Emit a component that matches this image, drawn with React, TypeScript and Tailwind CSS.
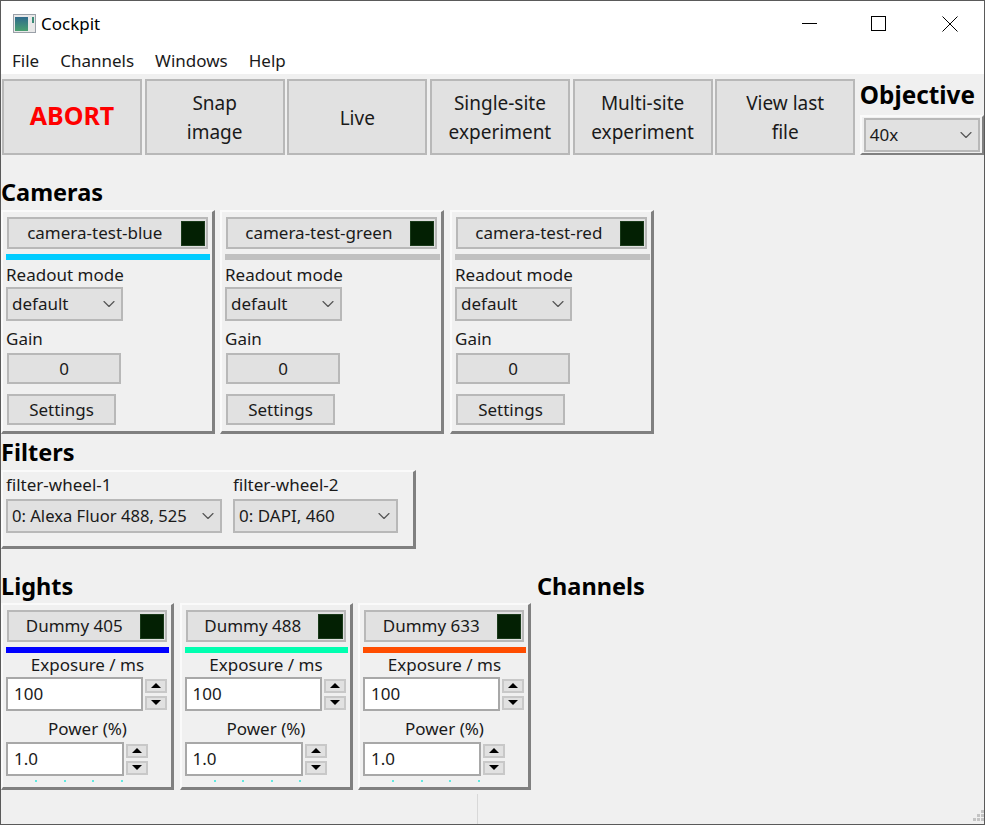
import { ChevronDown } from "lucide-react";

const font = "font-['Noto_Sans',sans-serif]";

function Chev() {
  return <ChevronDown className="w-[20px] h-[20px] text-[#555]" strokeWidth={1.4} />;
}

function Select({ label, w, text = "text-[17px]" }: { label: string; w: string; text?: string }) {
  return (
    <div className={`${w} h-[34px] bg-[#e1e1e1] border-2 border-[#b8b8b8] flex items-center justify-between pl-[4px] pr-[2px] ${text} text-[#1a1a1a]`}>
      <span className="whitespace-nowrap">{label}</span>
      <Chev />
    </div>
  );
}

function Btn({ children, className }: { children: React.ReactNode; className: string }) {
  return (
    <div className={`bg-[#e1e1e1] border-2 border-[#b8b8b8] flex items-center justify-center text-[#1a1a1a] ${className}`}>
      {children}
    </div>
  );
}

function Panel({ children, className }: { children: React.ReactNode; className: string }) {
  return (
    <div className={`bg-[#f0f0f0] border-t-2 border-l-2 border-t-[#fafafa] border-l-[#fafafa] border-r-[3px] border-b-[3px] border-r-[#808080] border-b-[#808080] ${className}`}>
      {children}
    </div>
  );
}

function Header({ label, w, textW }: { label: string; w: string; textW: string }) {
  return (
    <div className={`${w} h-[32px] bg-[#e1e1e1] border-2 border-[#b8b8b8] flex items-center text-[17px] text-[#1a1a1a]`}>
      <span className={`${textW} text-center whitespace-nowrap`}>{label}</span>
      <div className="ml-auto mr-[1px] w-[25px] h-[25px] bg-[#032003] border border-[#1a3a1a]" />
    </div>
  );
}

type CameraProps = { name: string; color: string; w: string; headW: string; textW: string; barW: string };

function Camera({ name, color, w, headW, textW, barW }: CameraProps) {
  return (
    <Panel className={`${w} h-[224px] pt-[5px] pl-[3px] text-[17px] text-[#1a1a1a]`}>
      <div className="pl-[1px]">
        <Header label={name} w={headW} textW={textW} />
      </div>
      <div className={`${barW} h-[6px] mt-[5px] ${color}`} />
      <div className="h-[24px] leading-[24px] mt-[3px]">Readout mode</div>
      <Select label="default" w="w-[117px]" />
      <div className="h-[24px] leading-[24px] mt-[6px]">Gain</div>
      <div className="pl-[1px] mt-[2px]">
        <Btn className="w-[114px] h-[31px]">0</Btn>
      </div>
      <div className="pl-[1px] mt-[10px]">
        <Btn className="w-[109px] h-[31px]">Settings</Btn>
      </div>
    </Panel>
  );
}

function SpinBtn({ up }: { up: boolean }) {
  return (
    <div className="w-[22px] h-[14px] bg-[#e1e1e1] border-2 border-[#c8c8c8] flex items-center justify-center">
      <div className={`w-0 h-0 border-l-[5px] border-r-[5px] border-l-transparent border-r-transparent ${up ? "border-b-[5px] border-b-black" : "border-t-[5px] border-t-black"}`} />
    </div>
  );
}

function Spin({ value, w }: { value: string; w: string }) {
  return (
    <div className="flex items-center gap-[2px]">
      <div className={`${w} h-[34px] bg-white border-2 border-[#a8a8a8] pl-[6px] flex items-center text-[17px] text-[#1a1a1a]`}>
        {value}
      </div>
      <div className="flex flex-col gap-[3px]">
        <SpinBtn up />
        <SpinBtn up={false} />
      </div>
    </div>
  );
}

function Light({ name, color }: { name: string; color: string }) {
  return (
    <Panel className="w-[173px] h-[187px] pt-[5px] pl-[3px] text-[17px] text-[#1a1a1a]">
      <div className="pl-[1px]">
        <Header label={name} w="w-[160px]" textW="w-[134px]" />
      </div>
      <div className={`w-[163px] h-[6px] mt-[5px] ${color}`} />
      <div className="w-[163px] text-center h-[24px] leading-[24px]">Exposure / ms</div>
      <Spin value="100" w="w-[137px]" />
      <div className="w-[163px] text-center h-[24px] leading-[24px] mt-[6px]">Power (%)</div>
      <div className="mt-[1px]">
        <Spin value="1.0" w="w-[118px]" />
      </div>
      <div className="flex gap-[26.5px] pl-[29px] mt-[4px]">
        <div className="w-[2px] h-[2px] bg-[#60e8e0]" />
        <div className="w-[2px] h-[2px] bg-[#60e8e0]" />
        <div className="w-[2px] h-[2px] bg-[#60e8e0]" />
        <div className="w-[2px] h-[2px] bg-[#60e8e0]" />
      </div>
    </Panel>
  );
}

const tools = [
  ["Snap", "image"],
  ["Live"],
  ["Single-site", "experiment"],
  ["Multi-site", "experiment"],
  ["View last", "file"],
];

export default function App() {
  return (
    <div className={`${font} relative w-[985px] h-[825px] overflow-hidden bg-[#f0f0f0] border border-[#5a5a5a] flex flex-col`}>
      {/* title bar */}
      <div className="h-[45px] bg-white flex items-center shrink-0">
        <svg width="24" height="20" viewBox="0 0 24 20" className="ml-[12px]">
          <defs>
            <linearGradient id="ico" x1="0" y1="0" x2="0" y2="1">
              <stop offset="0" stopColor="#2f6a8c" />
              <stop offset="1" stopColor="#4aa070" />
            </linearGradient>
          </defs>
          <rect x="0.5" y="0.5" width="22" height="18" fill="#e8e8e8" stroke="#9aa0a8" />
          <rect x="2" y="3" width="13" height="14" fill="url(#ico)" />
          <rect x="19" y="3" width="2" height="6" fill="#3c8c78" />
        </svg>
        <span className="ml-[4px] text-[17px] text-black">Cockpit</span>
        <div className="ml-auto flex items-center mr-[26px]">
          <div className="w-[15px] h-px bg-black mr-[54px]" />
          <div className="w-[15px] h-[15px] border border-black mr-[56px]" />
          <svg width="16" height="16" viewBox="0 0 16 16">
            <path d="M0.5 0.5L15.5 15.5M15.5 0.5L0.5 15.5" stroke="black" strokeWidth="1" fill="none" />
          </svg>
        </div>
      </div>
      {/* menu */}
      <div className="h-[28px] pt-[2px] bg-white flex items-center pl-[11px] gap-[21px] text-[17px] text-[#1a1a1a] shrink-0">
        <span>File</span>
        <span>Channels</span>
        <span>Windows</span>
        <span>Help</span>
      </div>
      {/* toolbar */}
      <div className="flex items-start pl-[1px] pt-[5px] gap-[2.65px] shrink-0">
        <Btn className="w-[140px] h-[76px] pb-[2px] text-[25px] font-bold !text-[#ff0000]">ABORT</Btn>
        {tools.map((t) => (
          <Btn key={t[0]} className="w-[140px] h-[76px] pt-[2px] text-[19px] leading-[29px] text-center flex-col">
            {t.map((l) => (
              <span key={l}>{l}</span>
            ))}
          </Btn>
        ))}
        <div className="ml-[2px] flex-1">
          <div className="text-[24.3px] leading-[32px] font-bold text-black whitespace-nowrap">Objective</div>
          <div className="mt-[4px] h-[40px] border-t-2 border-l-2 border-t-[#fafafa] border-l-[#fafafa] border-r-[2px] border-b-[2px] border-r-[#808080] border-b-[#808080] pl-[2px] pt-[1px]">
            <Select label="40x" w="w-[116px]" />
          </div>
        </div>
      </div>
      <div className="text-[#000]">
        <div className="text-[23.5px] leading-[32px] font-bold mt-[21px]">Cameras</div>
        <div className="flex mt-[2px]">
          <Camera name="camera-test-blue" color="bg-[#00ccff]" w="w-[214px]" headW="w-[201px]" textW="w-[176px]" barW="w-[204px]" />
          <div className="w-[5px]" />
          <Camera name="camera-test-green" color="bg-[#c0c0c0]" w="w-[224px]" headW="w-[211px]" textW="w-[187px]" barW="w-[215px]" />
          <div className="w-[6px]" />
          <Camera name="camera-test-red" color="bg-[#c0c0c0]" w="w-[204px]" headW="w-[191px]" textW="w-[167px]" barW="w-[195px]" />
        </div>
        <div className="text-[23.5px] leading-[32px] font-bold mt-[2px]">Filters</div>
        <Panel className="w-[415px] h-[79px] mt-[2px] pl-[3px] text-[17px] text-[#1a1a1a] flex gap-[11px]">
          <div>
            <div className="h-[24px] leading-[24px] mt-[1px]">filter-wheel-1</div>
            <div className="mt-[2px]"><Select label="0: Alexa Fluor 488, 525" w="w-[216px]" text="text-[16.6px]" /></div>
          </div>
          <div>
            <div className="h-[24px] leading-[24px] mt-[1px]">filter-wheel-2</div>
            <div className="mt-[2px]"><Select label="0: DAPI, 460" w="w-[165px]" /></div>
          </div>
        </Panel>
        <div className="flex mt-[21px]">
          <div className="w-[536px] text-[23.5px] leading-[32px] font-bold">Lights</div>
          <div className="text-[23.5px] leading-[32px] font-bold">Channels</div>
        </div>
        <div className="flex gap-[5.5px] mt-[1px]">
          <Light name="Dummy 405" color="bg-[#0000ff]" />
          <Light name="Dummy 488" color="bg-[#00ffb0]" />
          <Light name="Dummy 633" color="bg-[#ff4d00]" />
        </div>
      </div>
      {/* status bar */}
      <div className="absolute left-[476px] bottom-0 w-px h-[30px] bg-[#d8d8d8]" />
      <svg width="12" height="14" viewBox="0 0 12 14" className="absolute right-0 bottom-[1px]">
        <g fill="#c4c4c4">
          <rect x="9" y="1" width="3" height="3" />
          <rect x="5" y="5" width="3" height="3" />
          <rect x="9" y="5" width="3" height="3" />
          <rect x="1" y="9" width="3" height="3" />
          <rect x="5" y="9" width="3" height="3" />
          <rect x="9" y="9" width="3" height="3" />
        </g>
      </svg>
    </div>
  );
}
